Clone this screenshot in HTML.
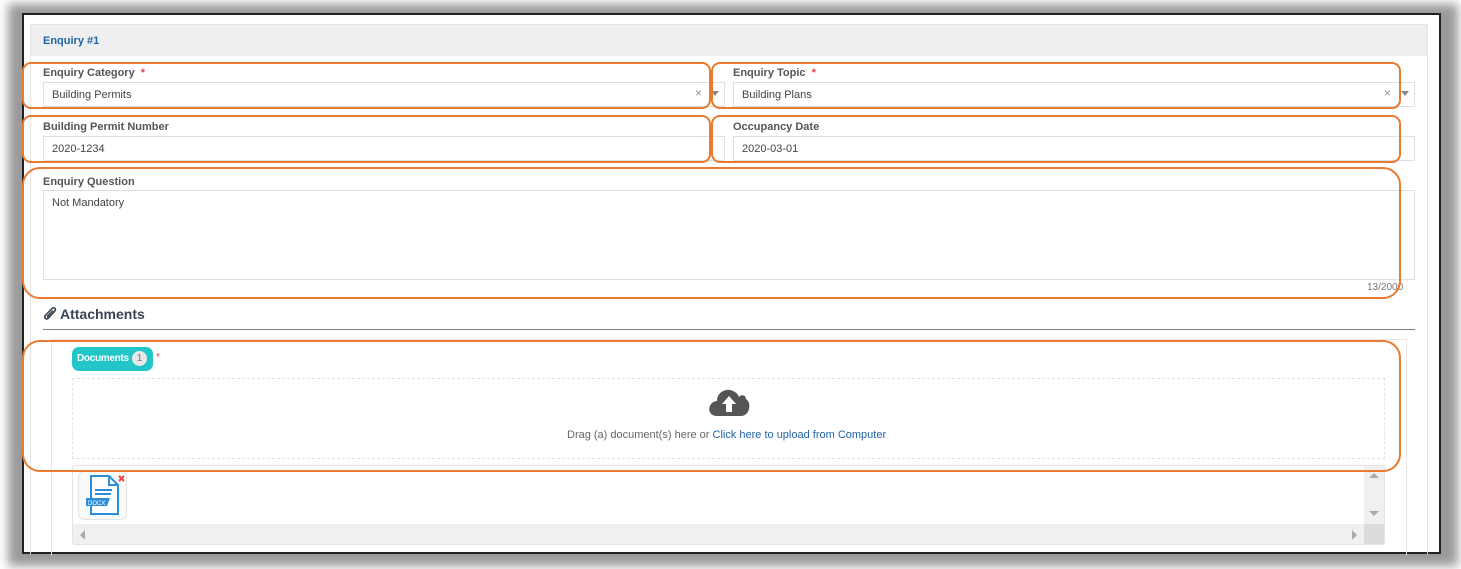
<!DOCTYPE html>
<html><head><meta charset="utf-8"><style>
*{box-sizing:border-box;margin:0;padding:0}
body{width:1461px;height:569px;background:#fff;position:relative;overflow:hidden;font-family:"Liberation Sans",sans-serif;}
.shadow{position:absolute;left:8px;top:4px;width:1450px;height:562px;background:#9a9a9a;filter:blur(5px);}
.frame{position:absolute;left:22px;top:13px;width:1419px;height:541px;background:#fff;border:2px solid #222;overflow:hidden}
.a{position:absolute}
.lbl{font-size:11px;font-weight:bold;color:#555}
.inp{border:1px solid #dcdfe4;background:#fff;font-size:11px;color:#444;padding-left:8px;display:flex;align-items:center}
.o{position:absolute;border:2px solid #ea7a2e}
.star{color:#e8424f}
</style></head><body>
<div class="shadow"></div>
<div class="frame"></div>
<div class="a" style="left:30px;top:24px;width:1398px;height:530px;border:1px solid #e4e4e4;border-bottom:none"></div>
<div class="a" style="left:31px;top:25px;width:1396px;height:31px;background:#efefef"></div>
<div class="a" style="left:43px;top:35px;font-size:11px;font-weight:bold;color:#2164a8">Enquiry #1</div>

<div class="a lbl" style="left:43px;top:67px">Enquiry Category <span class="star">&nbsp;*</span></div>
<div class="a inp" style="left:43px;top:82px;width:682px;height:25px">Building Permits</div>
<div class="a" style="left:695px;top:86px;font-size:12px;color:#999">×</div>
<div class="a" style="left:711px;top:91px;border-left:4px solid transparent;border-right:4px solid transparent;border-top:5px solid #888"></div>
<div class="a lbl" style="left:733px;top:67px">Enquiry Topic <span class="star">&nbsp;*</span></div>
<div class="a inp" style="left:733px;top:82px;width:682px;height:25px">Building Plans</div>
<div class="a" style="left:1384px;top:86px;font-size:12px;color:#999">×</div>
<div class="a" style="left:1401px;top:91px;border-left:4px solid transparent;border-right:4px solid transparent;border-top:5px solid #888"></div>

<div class="a lbl" style="left:43px;top:121px">Building Permit Number</div>
<div class="a inp" style="left:43px;top:136px;width:682px;height:25px">2020-1234</div>
<div class="a lbl" style="left:733px;top:121px">Occupancy Date</div>
<div class="a inp" style="left:733px;top:136px;width:682px;height:25px">2020-03-01</div>

<div class="a lbl" style="left:43px;top:176px">Enquiry Question</div>
<div class="a inp" style="left:43px;top:190px;width:1372px;height:90px;align-items:flex-start;padding-top:6px">Not Mandatory</div>
<div class="a" style="left:1367px;top:282px;font-size:10px;color:#777">13/2000</div>

<svg class="a" style="left:43px;top:306px" width="14" height="16" viewBox="0 0 14 16"><path d="M11 6 L5.5 12 C4 13.5 2 13 1.8 11.5 C1.6 10.5 2 9.8 2.8 9 L9 2.5 C10 1.5 11.8 1.6 12.3 3 C12.6 4 12.2 4.7 11.5 5.4 L6 11 C5.4 11.6 4.6 11.3 4.6 10.6 C4.6 10.2 4.8 9.9 5.2 9.5 L9.5 5" fill="none" stroke="#3a4552" stroke-width="1.6" stroke-linecap="round"/></svg>
<div class="a" style="left:60px;top:306px;font-size:14px;font-weight:bold;color:#3a4552">Attachments</div>
<div class="a" style="left:43px;top:329px;width:1372px;height:1px;background:#7a8490"></div>

<div class="a" style="left:51px;top:339px;width:1356px;height:216px;border:1px solid #e6e6e6;border-bottom:none"></div>
<div class="a" style="left:72px;top:347px;width:81px;height:24px;border-radius:7px;background:#22c5c8;color:#fff;font-size:10px;font-weight:bold;padding:6px 0 0 5px;letter-spacing:-0.3px">Documents</div>
<div class="a" style="left:132px;top:351px;width:15px;height:15px;border-radius:50%;background:#e8e8e8;color:#777;font-size:10px;text-align:center;line-height:15px">1</div>
<div class="a star" style="left:156px;top:352px;font-size:10px">*</div>
<div class="a" style="left:72px;top:378px;width:1313px;height:81px;border:1px dashed #e2e2e2"></div>
<svg class="a" style="left:708px;top:387px" width="42" height="30" viewBox="0 0 42 30"><path d="M9 29 C2 29 0 23 2 19 C3 16 6 14 9 14 C9 7 15 2 22 3 C27 4 30 7 31 10 C33 7 38 8 38 12 C41 14 42 18 41 22 C40 26 37 29 33 29 Z" fill="#555"/><path d="M21 9 L28 17 L24 17 L24 25 L18 25 L18 17 L14 17 Z" fill="#fff"/></svg>
<div class="a" style="left:567px;top:429px;font-size:11px;color:#666">Drag (a) document(s) here or <span style="color:#2164a8">Click here to upload from Computer</span></div>

<div class="a" style="left:72px;top:465px;width:1313px;height:80px;border:1px solid #e4e4e4;border-radius:3px"></div>
<div class="a" style="left:1364px;top:466px;width:20px;height:58px;background:#f0f0f0"></div>
<div class="a" style="left:73px;top:524px;width:1291px;height:20px;background:#f0f0f0"></div>
<div class="a" style="left:1364px;top:524px;width:20px;height:20px;background:#dcdcdc"></div>
<div class="a" style="left:1369px;top:473px;border-left:5px solid transparent;border-right:5px solid transparent;border-bottom:5px solid #aaa"></div>
<div class="a" style="left:1369px;top:511px;border-left:5px solid transparent;border-right:5px solid transparent;border-top:5px solid #aaa"></div>
<div class="a" style="left:80px;top:530px;border-top:5px solid transparent;border-bottom:5px solid transparent;border-right:5px solid #aaa"></div>
<div class="a" style="left:1352px;top:530px;border-top:5px solid transparent;border-bottom:5px solid transparent;border-left:5px solid #aaa"></div>
<div class="a" style="left:78px;top:471px;width:49px;height:49px;border:1px solid #e4e4e4;border-radius:6px;background:#fafafa"></div>
<svg class="a" style="left:84px;top:474px" width="46" height="42" viewBox="0 0 46 42"><path d="M7 2 L25 2 L34 11 L34 40 L7 40 Z" fill="#fff" stroke="#2a8ed8" stroke-width="2"/><path d="M25 2 L25 11 L34 11" fill="none" stroke="#2a8ed8" stroke-width="2"/><path d="M11 16 L28 16 M11 20 L27 20" stroke="#2a8ed8" stroke-width="2"/><path d="M2 24 L26 24 L23 32 L2 32 Z" fill="#2a8ed8"/><text x="4" y="31" font-size="6" fill="#fff" font-family="Liberation Sans">DOCX</text><path d="M35 2 L40 7 M40 2 L35 7" stroke="#e8424f" stroke-width="2"/></svg>

<div class="o" style="left:22px;top:62px;width:689px;height:47px;border-radius:9px"></div>
<div class="o" style="left:711px;top:62px;width:690px;height:47px;border-radius:9px"></div>
<div class="o" style="left:22px;top:115px;width:689px;height:48px;border-radius:9px"></div>
<div class="o" style="left:711px;top:115px;width:690px;height:48px;border-radius:9px"></div>
<div class="o" style="left:22px;top:167px;width:1379px;height:132px;border-radius:18px"></div>
<div class="o" style="left:22px;top:340px;width:1379px;height:132px;border-radius:18px"></div>
</body></html>
